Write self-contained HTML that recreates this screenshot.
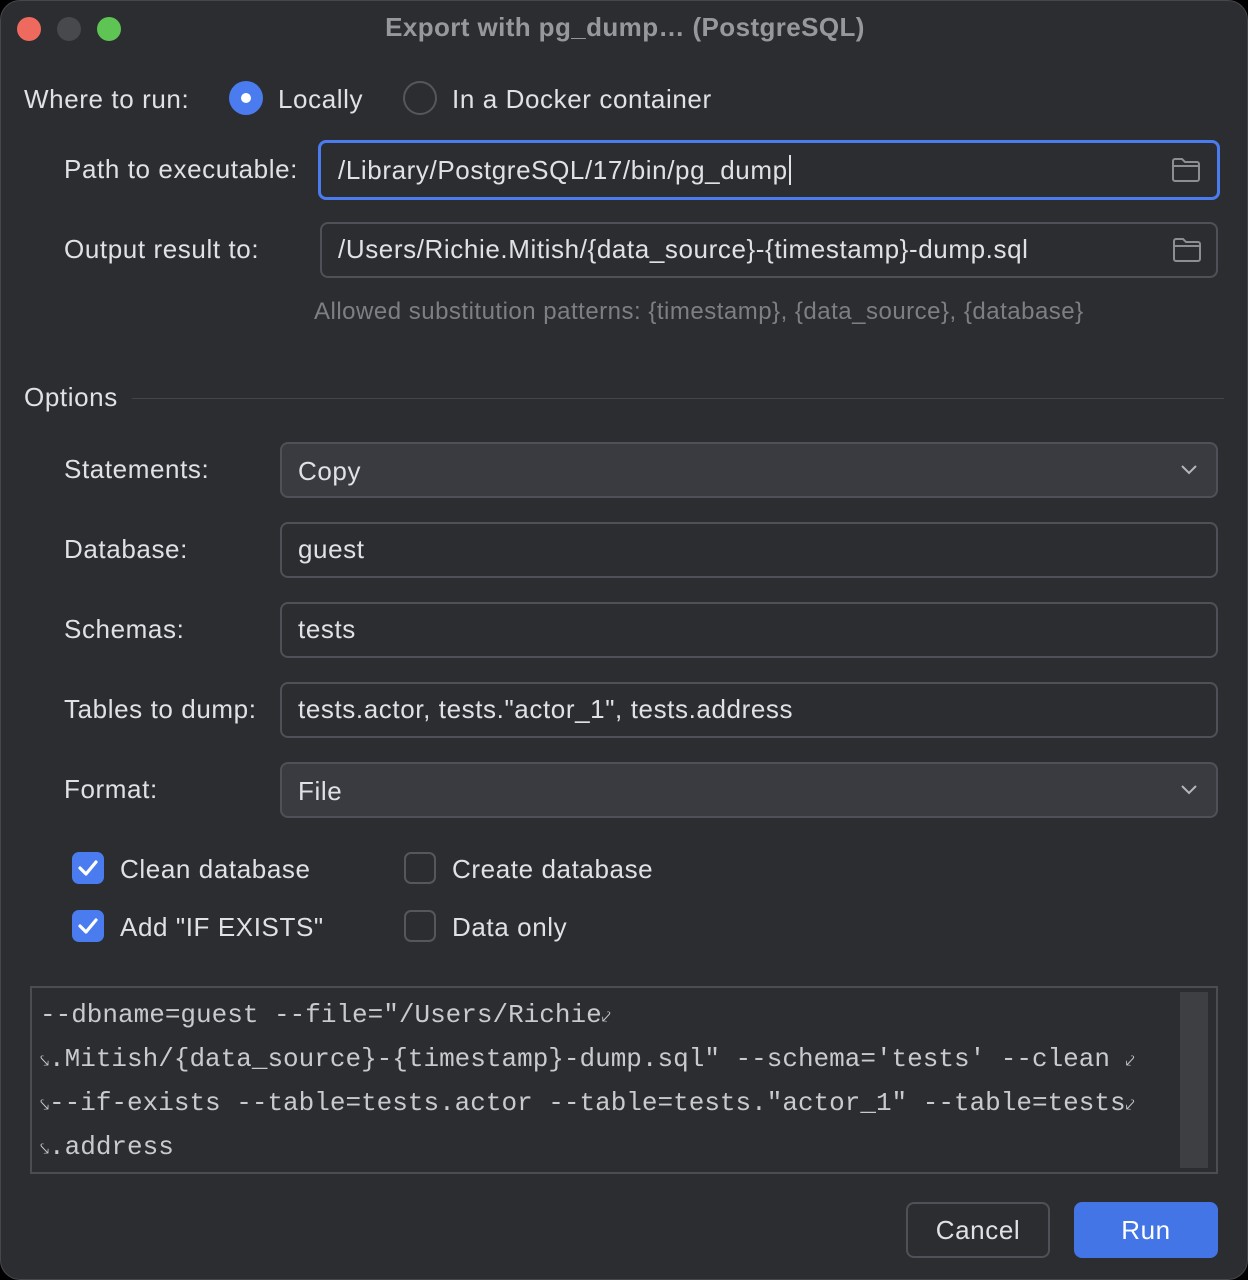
<!DOCTYPE html>
<html><head><meta charset="utf-8"><style>
*{box-sizing:border-box;margin:0;padding:0}
body{width:1248px;height:1280px;background:#000;overflow:hidden;font-family:"Liberation Sans",sans-serif;color:#dfe1e5}
#w{position:absolute;left:0;top:0;width:1248px;height:1280px;background:#2b2d30;border-radius:20px;border:1px solid #45474b}
.a{position:absolute;white-space:nowrap}
.t{font-size:26px;line-height:30px;letter-spacing:0.6px}
.f{position:absolute;border:2px solid #4e5157;border-radius:8px;background:#2b2d30}
.c{background:#393b40}
.fold{position:absolute;right:16px;top:16px}
.chev{position:absolute;right:18px;top:19px}
.cb{position:absolute;width:32px;height:32px;border-radius:7px}
.on{background:#4a7cf0}
.off{border:2px solid #55575c}
.m{font-family:"Liberation Mono",monospace;font-size:26px;color:#c8cacf;line-height:44px}
.m span{font-size:16px;line-height:0}
</style></head><body><div id="w">
<div class="a" style="left:16px;top:16px;width:24px;height:24px;border-radius:12px;background:#ee6a5f"></div>
<div class="a" style="left:56px;top:16px;width:24px;height:24px;border-radius:12px;background:#48494c"></div>
<div class="a" style="left:96px;top:16px;width:24px;height:24px;border-radius:12px;background:#5ec453"></div>
<div class="a t" style="left:0;width:1248px;text-align:center;top:11px;font-weight:bold;color:#96989c;letter-spacing:0.4px">Export with pg_dump… (PostgreSQL)</div>

<div class="a t" style="left:23px;top:83px">Where to run:</div>
<div class="a" style="left:228px;top:80px;width:34px;height:34px;border-radius:17px;background:#4a7cf0"><div style="position:absolute;left:12px;top:12px;width:10px;height:10px;border-radius:5px;background:#fff"></div></div>
<div class="a t" style="left:277px;top:83px">Locally</div>
<div class="a" style="left:402px;top:80px;width:34px;height:34px;border-radius:17px;border:2px solid #55575c"></div>
<div class="a t" style="left:451px;top:83px">In a Docker container</div>

<div class="a t" style="left:63px;top:153px">Path to executable:</div>
<div class="f" style="left:317px;top:139px;width:902px;height:60px;border:3px solid #4a7cf0"><div class="a t" style="left:17px;top:12px">/Library/PostgreSQL/17/bin/pg_dump<span style="border-left:2px solid #dfe1e5;margin-left:1px"></span></div>
<svg class="fold" style="right:16px;top:14px" width="30" height="26" viewBox="0 0 30 26"><path d="M2 4a2 2 0 0 1 2-2h7l3 3h12a2 2 0 0 1 2 2v15a2 2 0 0 1-2 2H4a2 2 0 0 1-2-2z M2 9h26" fill="none" stroke="#8c8e92" stroke-width="2"/></svg></div>

<div class="a t" style="left:63px;top:233px">Output result to:</div>
<div class="f" style="left:319px;top:221px;width:898px;height:56px"><div class="a t" style="left:16px;top:10px">/Users/Richie.Mitish/{data_source}-{timestamp}-dump.sql</div>
<svg class="fold" style="right:14px;top:13px" width="30" height="26" viewBox="0 0 30 26"><path d="M2 4a2 2 0 0 1 2-2h7l3 3h12a2 2 0 0 1 2 2v15a2 2 0 0 1-2 2H4a2 2 0 0 1-2-2z M2 9h26" fill="none" stroke="#8c8e92" stroke-width="2"/></svg></div>
<div class="a" style="left:313px;top:297px;font-size:24px;letter-spacing:0.5px;color:#7d7f84">Allowed substitution patterns: {timestamp}, {data_source}, {database}</div>

<div class="a t" style="left:23px;top:381px">Options</div>
<div class="a" style="left:131px;top:397px;width:1092px;height:1px;background:#43454a"></div>

<div class="a t" style="left:63px;top:453px">Statements:</div>
<div class="f c" style="left:279px;top:441px;width:938px;height:56px"><div class="a t" style="left:16px;top:12px">Copy</div><svg class="chev" width="18" height="12"><path d="M2 3l7 7 7-7" fill="none" stroke="#b4b6ba" stroke-width="2"/></svg></div>
<div class="a t" style="left:63px;top:533px">Database:</div>
<div class="f" style="left:279px;top:521px;width:938px;height:56px"><div class="a t" style="left:16px;top:10px">guest</div></div>
<div class="a t" style="left:63px;top:613px">Schemas:</div>
<div class="f" style="left:279px;top:601px;width:938px;height:56px"><div class="a t" style="left:16px;top:10px">tests</div></div>
<div class="a t" style="left:63px;top:693px">Tables to dump:</div>
<div class="f" style="left:279px;top:681px;width:938px;height:56px"><div class="a t" style="left:16px;top:10px">tests.actor, tests."actor_1", tests.address</div></div>
<div class="a t" style="left:63px;top:773px">Format:</div>
<div class="f c" style="left:279px;top:761px;width:938px;height:56px"><div class="a t" style="left:16px;top:12px">File</div><svg class="chev" width="18" height="12"><path d="M2 3l7 7 7-7" fill="none" stroke="#b4b6ba" stroke-width="2"/></svg></div>

<div class="cb on" style="left:71px;top:851px"><svg width="32" height="32"><path d="M8 16l6 6 10-12" fill="none" stroke="#fff" stroke-width="3.2" stroke-linecap="round" stroke-linejoin="round"/></svg></div>
<div class="a t" style="left:119px;top:853px">Clean database</div>
<div class="cb off" style="left:403px;top:851px"></div>
<div class="a t" style="left:451px;top:853px">Create database</div>
<div class="cb on" style="left:71px;top:909px"><svg width="32" height="32"><path d="M8 16l6 6 10-12" fill="none" stroke="#fff" stroke-width="3.2" stroke-linecap="round" stroke-linejoin="round"/></svg></div>
<div class="a t" style="left:119px;top:911px">Add "IF EXISTS"</div>
<div class="cb off" style="left:403px;top:909px"></div>
<div class="a t" style="left:451px;top:911px">Data only</div>

<div class="a" style="left:29px;top:985px;width:1188px;height:188px;border:2px solid #4b4d51">
<div class="a" style="left:1148px;top:4px;width:28px;height:176px;background:#3d3f42"></div>
<div class="a m" style="left:8px;top:5px">--dbname=guest --file="/Users/Richie<span>⤦</span><br><span>⤥</span>.Mitish/{data_source}-{timestamp}-dump.sql" --schema='tests' --clean <span>⤦</span><br><span>⤥</span>--if-exists --table=tests.actor --table=tests."actor_1" --table=tests<span>⤦</span><br><span>⤥</span>.address</div>
</div>

<div class="a" style="left:905px;top:1201px;width:144px;height:56px;border:2px solid #4e5157;border-radius:8px"><div class="t" style="text-align:center;margin-top:11px">Cancel</div></div>
<div class="a" style="left:1073px;top:1201px;width:144px;height:56px;background:#4475e6;border-radius:8px"><div class="t" style="text-align:center;margin-top:13px;color:#fff">Run</div></div>
</div></body></html>
